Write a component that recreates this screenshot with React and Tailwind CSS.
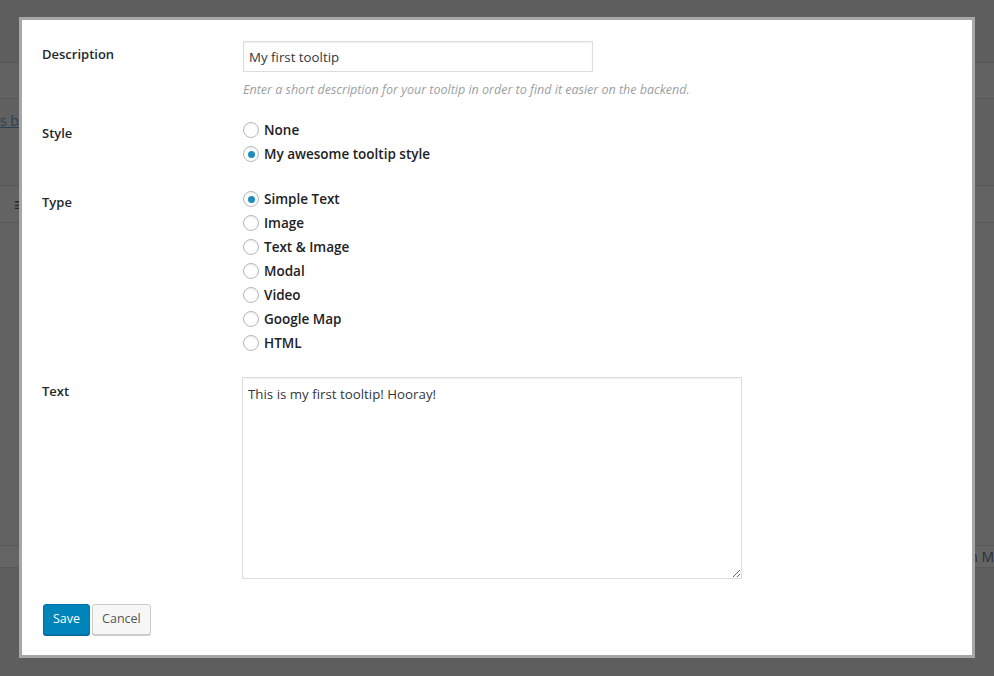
import { useState } from 'react';

const STYLES = ['None', 'My awesome tooltip style'];
const TYPES = ['Simple Text', 'Image', 'Text & Image', 'Modal', 'Video', 'Google Map', 'HTML'];

function Radio({ label, checked, onChange }) {
  return (
    <label className="flex h-6 cursor-pointer items-center gap-[5px]">
      <span className="flex h-4 w-4 items-center justify-center rounded-full border border-[#b4b9be] bg-white shadow-[inset_0_1px_2px_rgba(0,0,0,0.07)]">
        {checked && <span className="h-[7px] w-[7px] rounded-full bg-[#1e8cbe]" />}
      </span>
      <input type="radio" className="hidden" checked={checked} onChange={onChange} />
      <span className="text-[13.5px] font-semibold text-[#1d2125]">{label}</span>
    </label>
  );
}

function Row({ label, labelPad, children }) {
  return (
    <div className="flex">
      <div className={`w-[201px] shrink-0 text-[13px] font-semibold leading-[18px] text-[#23282d] ${labelPad}`}>
        {label}
      </div>
      <div className="flex-1">{children}</div>
    </div>
  );
}

export default function App() {
  const [style, setStyle] = useState(1);
  const [type, setType] = useState(0);

  return (
    <div
      className="relative h-[676px] w-[994px] overflow-hidden bg-[#5e5e5e]"
      style={{ fontFamily: '"Open Sans", "Noto Sans", sans-serif' }}
    >
      {/* page behind the overlay */}
      <div className="flex flex-col">
        <div className="h-[62px]" />
        <div className="h-[37px] border-y border-[#575757] bg-[#626262]" />
        <div className="h-[86px] bg-[#606060] pt-[9px]">
          <span className="text-[14px] text-[#2b3f57] underline">s ba</span>
        </div>
        <div className="flex h-[38px] items-center border-y border-[#575757] bg-[#636363] pl-[14px]">
          <span className="text-[18px] font-bold leading-none text-[#262626]">≡</span>
        </div>
        <div className="h-[322px] bg-[#626262]" />
        <div className="flex h-[23px] items-center justify-end border-y border-[#585858] bg-[#646464]">
          <span className="text-[14px] text-[#2a2f3a]">n M</span>
        </div>
        <div className="flex-1 bg-[#616161]" />
      </div>

      {/* modal */}
      <div className="absolute left-[19px] top-[17px] h-[641px] w-[956px] border-[3px] border-[#a7a7a7] bg-white">
        <div className="flex flex-col pl-[20px] pt-[21px]">
          <Row label="Description" labelPad="pt-[4px]">
            <input
              defaultValue="My first tooltip"
              className="h-[31px] w-[350px] border border-[#dddddd] px-[5px] text-[13.3px] text-[#32373c] shadow-[inset_0_1px_2px_rgba(0,0,0,0.07)] outline-none"
            />
            <p className="mt-[9px] text-[12.5px] italic leading-[18px] text-[#9a9fa4]">
              Enter a short description for your tooltip in order to find it easier on the backend.
            </p>
          </Row>

          <div className="h-[19px]" />
          <Row label="Style" labelPad="pt-[6px]">
            {STYLES.map((s, i) => (
              <Radio key={s} label={s} checked={style === i} onChange={() => setStyle(i)} />
            ))}
          </Row>

          <div className="h-[21px]" />
          <Row label="Type" labelPad="pt-[6px]">
            {TYPES.map((t, i) => (
              <Radio key={t} label={t} checked={type === i} onChange={() => setType(i)} />
            ))}
          </Row>

          <div className="h-[22px]" />
          <Row label="Text" labelPad="pt-[5px]">
            <textarea
              defaultValue="This is my first tooltip! Hooray!"
              className="-ml-px block h-[202px] w-[500px] border border-[#dddddd] px-[5px] py-[6px] text-[13.3px] leading-[20px] text-[#32373c] shadow-[inset_0_1px_2px_rgba(0,0,0,0.07)] outline-none"
            />
          </Row>

          <div className="mt-[25px] flex gap-[2px] pl-px">
            <button
              type="button"
              className="h-[31px] rounded-[3px] border border-[#0073aa] bg-[#0085ba] px-[9px] text-[12.5px] text-white shadow-[0_1px_0_#006799]"
            >
              Save
            </button>
            <button
              type="button"
              className="h-[31px] rounded-[3px] border border-[#cccccc] bg-[#f7f7f7] px-[9px] text-[12.5px] text-[#555555] shadow-[0_1px_0_#cccccc]"
            >
              Cancel
            </button>
          </div>
        </div>
      </div>
    </div>
  );
}
